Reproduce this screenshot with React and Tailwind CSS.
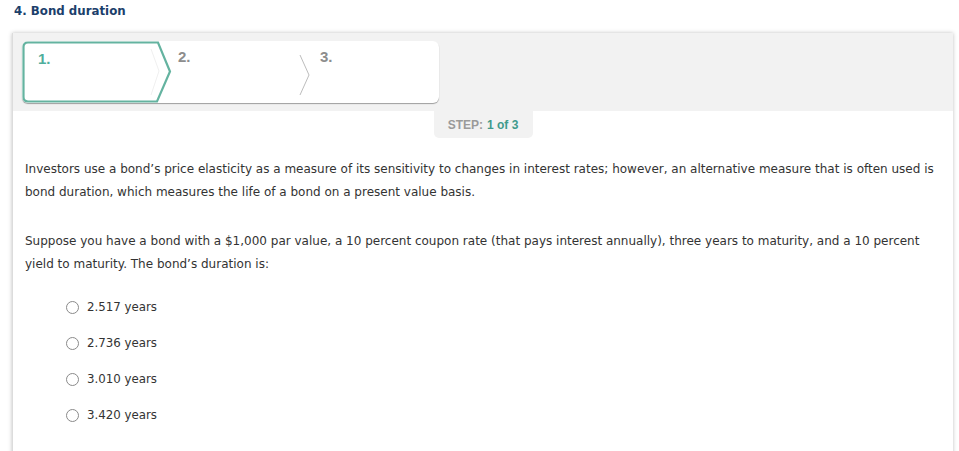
import React from "react";

const font = { fontFamily: '"DejaVu Sans", Verdana, sans-serif' };

function Radio({ label }) {
  return (
    <label className="flex items-center gap-[8px] h-[36px]">
      <span className="w-[13px] h-[13px] rounded-full border border-[#8a8a8a] bg-white shrink-0" />
      <span className="text-[11.8px] text-[#333]">{label}</span>
    </label>
  );
}

export default function App() {
  return (
    <div className="w-[959px] h-[451px] bg-white overflow-hidden" style={font}>
      <div className="pl-[14px] pt-[3px] h-[33px] text-[11.8px] font-bold text-[#1b3f6b]">4. Bond duration</div>
      <div className="ml-[12px] w-[941px] h-[430px] bg-white shadow-[0_0_4px_rgba(0,0,0,0.25)] border-l border-[#dcdcdc]">
        <div className="bg-[#f2f2f2] h-[78px] pt-[8px] pl-[9px]">
          <div className="relative w-[417px] h-[62px] bg-white rounded-[6px] shadow-[0_1px_1px_rgba(0,0,0,0.35)] flex" style={{ fontFamily: '"Liberation Sans", Arial, sans-serif' }}>
            <div className="relative w-[147px] h-full">
              <svg className="absolute left-0 top-0" width="150" height="62" viewBox="0 0 150 62">
                <path d="M6 1.5 H136 L148 30.5 L135 60.5 H6 Q1.5 60.5 1.5 56 V6 Q1.5 1.5 6 1.5 Z" fill="white" stroke="#64b3a0" strokeWidth="2.2" />
                <path d="M129 8 L137 30 L129 54" fill="none" stroke="#f0f0f0" strokeWidth="1" />
              </svg>
              <span className="absolute left-[16px] top-[7px] text-[15px] font-bold text-[#4fae9c]">1.</span>
            </div>
            <div className="relative w-[141px] h-full">
              <span className="absolute left-[9px] top-[5px] text-[15px] font-bold text-[#8d8d8d]">2.</span>
              <svg className="absolute left-[130px] top-[13px]" width="14" height="42" viewBox="0 0 14 42">
                <path d="M1 1 L10 21 L1 41" fill="none" stroke="#bdbdbd" strokeWidth="1" />
              </svg>
            </div>
            <div className="relative flex-1 h-full">
              <span className="absolute left-[10px] top-[5px] text-[15px] font-bold text-[#8d8d8d]">3.</span>
            </div>
          </div>
        </div>
        <div className="flex justify-center">
          <div className="w-[99px] h-[27px] bg-[#f2f2f2] rounded-b-[5px] flex items-center justify-center text-[12px] font-bold" style={{ fontFamily: '"Liberation Sans", Arial, sans-serif' }}>
            <span className="text-[#9a9a9a]">STEP:</span>
            <span className="text-[#3f9a8c] ml-[4px]">1 of 3</span>
          </div>
        </div>
        <div className="pl-[12px] pr-[16px] pt-[20px] text-[12px] leading-[23px] text-[#333]">
          <p>Investors use a bond’s price elasticity as a measure of its sensitivity to changes in interest rates; however, an alternative measure that is often used is bond duration, which measures the life of a bond on a present value basis.</p>
          <p className="mt-[26px]">Suppose you have a bond with a $1,000 par value, a 10 percent coupon rate (that pays interest annually), three years to maturity, and a 10 percent yield to maturity. The bond’s duration is:</p>
          <div className="mt-[13px] pl-[41px] flex flex-col">
            <Radio label="2.517 years" />
            <Radio label="2.736 years" />
            <Radio label="3.010 years" />
            <Radio label="3.420 years" />
          </div>
        </div>
      </div>
    </div>
  );
}
